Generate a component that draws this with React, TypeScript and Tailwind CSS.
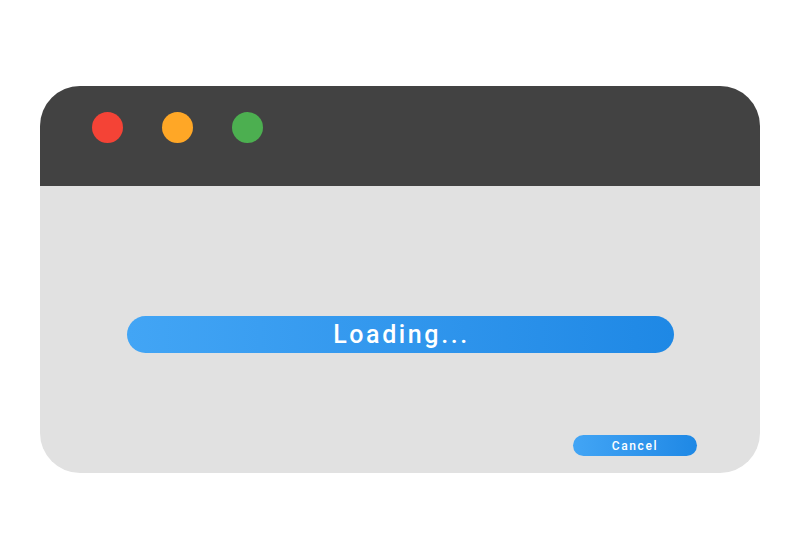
export default function App() {
  return (
    <div className="w-[800px] h-[560px] bg-white relative overflow-hidden" style={{ fontFamily: "Roboto, 'Liberation Sans', sans-serif" }}>
      <div className="absolute left-[40px] top-[86px] w-[720px] h-[387px] rounded-[40px] overflow-hidden flex flex-col bg-[#e1e1e1]">
        {/* title bar with window controls */}
        <div className="h-[100px] bg-[#424242] flex items-start pt-[26px] pl-[52px] gap-[39px]">
          <span className="w-[31px] h-[31px] rounded-full bg-[#f44336]" />
          <span className="w-[31px] h-[31px] rounded-full bg-[#ffa726]" />
          <span className="w-[31px] h-[31px] rounded-full bg-[#4caf50]" />
        </div>
        {/* content */}
        <div className="flex-1 flex flex-col">
          <div className="pt-[130px] flex justify-center">
            <div className="w-[547px] h-[37px] rounded-full bg-gradient-to-r from-[#42a5f5] to-[#1e88e5] flex items-center justify-center">
              <span className="text-white text-[25px] font-medium tracking-[2.6px] leading-none pl-[3px]">Loading...</span>
            </div>
          </div>
          <div className="flex-1" />
          <div className="flex justify-end pr-[63px] pb-[17px]">
            <button className="w-[124px] h-[21px] rounded-full bg-gradient-to-r from-[#42a5f5] to-[#1e88e5] text-white text-[12px] font-medium tracking-[1.6px] leading-none flex items-center justify-center">
              Cancel
            </button>
          </div>
        </div>
      </div>
    </div>
  );
}
